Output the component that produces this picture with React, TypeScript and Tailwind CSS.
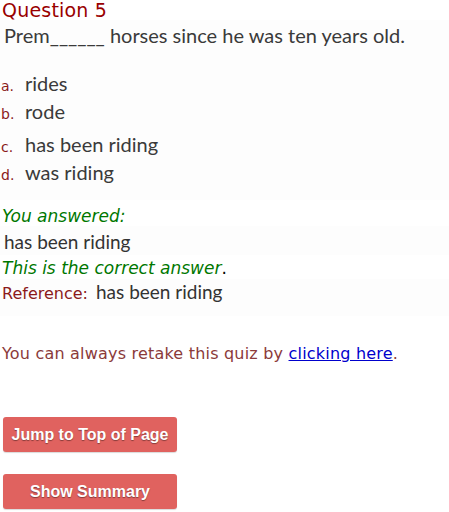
import React from 'react';

const options = [
  { key: 'a.', text: 'rides', pad: 'pt-[24px]' },
  { key: 'b.', text: 'rode', pad: 'pt-[3px]' },
  { key: 'c.', text: 'has been riding', pad: 'pt-[8px]' },
  { key: 'd.', text: 'was riding', pad: 'pt-[3px]' },
];

const verdana = "font-['DejaVu_Sans',Verdana,sans-serif]";
const calibri = "font-['Lato','Open_Sans',sans-serif]";

export default function App() {
  return (
    <div className="w-[449px] h-[512px] bg-white overflow-hidden">
      {/* Question */}
      <div className={`${verdana} text-[19px] leading-[20px] text-[#990000] pl-[2px] tracking-[0.2px]`}>
        Question 5
      </div>
      <div className="bg-[#fdfdfd] pb-[14px]">
        <div className={`${calibri} text-[20px] leading-[26px] text-[#3a3a3a] pl-[4px] pt-[2px]`}>
          Prem______ horses since he was ten years old.
        </div>

        <div>
          {options.map((o) => (
            <div key={o.key} className={`flex items-baseline ${o.pad}`}>
              <span className={`${verdana} text-[14px] text-[#8b1a1a] w-[25px] pl-[1px]`}>{o.key}</span>
              <span className={`${calibri} text-[20px] leading-[22px] text-[#3a3a3a]`}>{o.text}</span>
            </div>
          ))}
        </div>
      </div>

      {/* Answer */}
      <div className="pt-[6px]">
        <div className={`${verdana} italic text-[17px] leading-[20px] text-[#007700] pl-[2px]`}>
          You answered:
        </div>
        <div className={`${calibri} bg-[#fdfdfd] text-[19px] leading-[26px] text-[#333] pl-[4px] pt-[3px]`}>
          has been riding
        </div>
        <div className={`${verdana} italic text-[17px] leading-[22px] text-[#007700] pl-[2px] mt-[2px]`}>
          This is the correct answer<span className="text-black not-italic">.</span>
        </div>
        <div className="flex items-baseline bg-[#fdfdfd] pb-[10px]">
          <span className={`${verdana} text-[16px] text-[#8b1a1a] pl-[2px] w-[96px]`}>Reference:</span>
          <span className={`${calibri} text-[19px] leading-[26px] text-[#333]`}>has been riding</span>
        </div>
      </div>

      <div className={`${verdana} text-[16px] leading-[20px] text-[#8b3a3a] pl-[2px] pt-[28px] tracking-[0.2px]`}>
        You can always retake this quiz by{' '}
        <a href="#" className="text-[#0000cc] underline">clicking here</a>.
      </div>

      <div className="pl-[3px] pt-[53px] flex flex-col gap-[22px]">
        <button className="w-[174px] h-[35px] rounded-[3px] bg-[#e0625f] text-white font-bold text-[16px] font-['Liberation_Sans',Arial,sans-serif] [text-shadow:0_1px_1px_rgba(0,0,0,0.4)] shadow-[0_1px_1px_rgba(0,0,0,0.15)]">
          Jump to Top of Page
        </button>
        <button className="w-[174px] h-[35px] rounded-[3px] bg-[#e0625f] text-white font-bold text-[16px] font-['Liberation_Sans',Arial,sans-serif] [text-shadow:0_1px_1px_rgba(0,0,0,0.4)] shadow-[0_1px_1px_rgba(0,0,0,0.15)]">
          Show Summary
        </button>
      </div>
    </div>
  );
}
